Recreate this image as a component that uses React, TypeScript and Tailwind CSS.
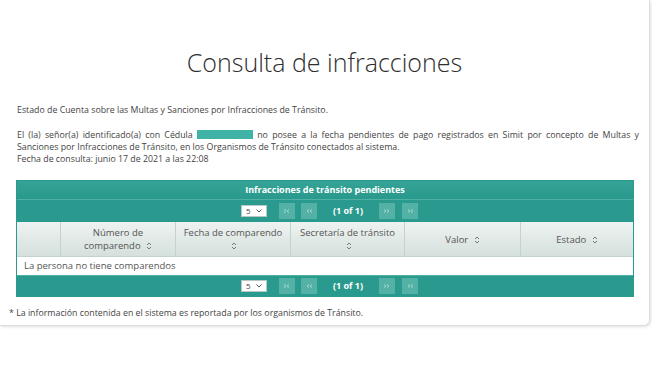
import React from "react";

const Sort = () => (
  <svg width="6" height="8" viewBox="0 0 6 8" className="inline-block ml-[3px] align-[-1px]">
    <path d="M1 3 L3 1 L5 3" fill="none" stroke="#6b6b6b" strokeWidth="0.9" />
    <path d="M1 5 L3 7 L5 5" fill="none" stroke="#6b6b6b" strokeWidth="0.9" />
  </svg>
);

const PgBtn = ({ kind }: { kind: "first" | "prev" | "next" | "last" }) => {
  const c = "#a9dcd5";
  return (
    <div className="w-[16px] h-[16px] bg-[#54b1a6] flex items-center justify-center">
      <svg width="8" height="6" viewBox="0 0 8 6">
        {kind === "first" && (
          <>
            <path d="M2 1 V5" stroke={c} strokeWidth="0.9" />
            <path d="M6 1.5 L4 3 L6 4.5" fill="none" stroke={c} strokeWidth="0.9" />
          </>
        )}
        {kind === "prev" && (
          <>
            <path d="M4 1.5 L2 3 L4 4.5" fill="none" stroke={c} strokeWidth="0.9" />
            <path d="M7 1.5 L5 3 L7 4.5" fill="none" stroke={c} strokeWidth="0.9" />
          </>
        )}
        {kind === "next" && (
          <>
            <path d="M1 1.5 L3 3 L1 4.5" fill="none" stroke={c} strokeWidth="0.9" />
            <path d="M4 1.5 L6 3 L4 4.5" fill="none" stroke={c} strokeWidth="0.9" />
          </>
        )}
        {kind === "last" && (
          <>
            <path d="M2 1.5 L4 3 L2 4.5" fill="none" stroke={c} strokeWidth="0.9" />
            <path d="M6 1 V5" stroke={c} strokeWidth="0.9" />
          </>
        )}
      </svg>
    </div>
  );
};

const Paginator = ({ h }: { h: string }) => (
  <div className={`${h} bg-[#2a9a8e] border-t border-[#4fb0a4] flex items-center pl-[224px]`}>
    <div className="w-[26px] h-[12px] bg-white border border-[#b8c8c4] flex items-center justify-between px-[4px] text-[8px] leading-[10px] text-[#444]">
      <span>5</span>
      <svg width="6" height="4" viewBox="0 0 6 4">
        <path d="M0.5 0.5 L3 3 L5.5 0.5" fill="none" stroke="#555" strokeWidth="1" />
      </svg>
    </div>
    <div className="ml-[12px] flex gap-[6px]">
      <PgBtn kind="first" />
      <PgBtn kind="prev" />
    </div>
    <div className="w-[62px] text-center text-white font-bold text-[9px]">(1 of 1)</div>
    <div className="flex gap-[7px]">
      <PgBtn kind="next" />
      <PgBtn kind="last" />
    </div>
  </div>
);

export default function App() {
  const th = "border-l border-[#c4d2cd] flex items-center justify-center text-center text-[9.5px] leading-[13px] text-[#555] px-1";
  return (
    <div className="w-[652px] h-[366px] bg-white overflow-hidden" style={{ fontFamily: '"Open Sans", sans-serif' }}>
      <div className="w-[650px] h-[326px] bg-white border-r border-b border-[#dedede] rounded-br-[6px] shadow-[1px_1px_3px_rgba(0,0,0,0.12)] flex flex-col">
        <h1 className="mt-[44px] text-center text-[25px] leading-[36px] font-light text-[#2e2e2e]">
          Consulta de infracciones
        </h1>
        <div className="mt-[24px] pl-[17px] pr-[10px] text-[8.8px] leading-[12px] text-[#444]">
          <p>Estado de Cuenta sobre las Multas y Sanciones por Infracciones de Tránsito.</p>
          <p className="mt-[13px] text-justify [text-align-last:justify]">
            El (la) señor(a) identificado(a) con Cédula{" "}
            <span className="inline-block w-[56px] h-[9px] bg-[#3fb3a6] align-[-1px]"></span> no posee a la fecha pendientes de pago registrados en Simit por concepto de Multas y
          </p>
          <p>Sanciones por Infracciones de Tránsito, en los Organismos de Tránsito conectados al sistema.</p>
          <p>Fecha de consulta: junio 17 de 2021 a las 22:08</p>
        </div>
        <div className="mt-[15px] ml-[16px] w-[618px] border border-[#2a9a8e]">
          <div className="h-[18px] bg-gradient-to-b from-[#35a497] to-[#2a998d] flex items-center justify-center text-white font-bold text-[9px]">
            Infracciones de tránsito pendientes
          </div>
          <Paginator h="h-[23px]" />
          <div className="h-[34px] bg-gradient-to-b from-[#eef3f1] to-[#d5e0dc] grid grid-cols-[43px_115px_115px_114px_116px_1fr]">
            <div></div>
            <div className={th}>
              <span>Número de<br />comparendo <Sort /></span>
            </div>
            <div className={th}>
              <span>Fecha de comparendo<br /><Sort /></span>
            </div>
            <div className={th}>
              <span>Secretaría de tránsito<br /><Sort /></span>
            </div>
            <div className={th}>
              <span>Valor <Sort /></span>
            </div>
            <div className={th}>
              <span>Estado <Sort /></span>
            </div>
          </div>
          <div className="h-[19px] bg-white border-t border-[#c4d2cd] flex items-center pl-[7px] text-[9.5px] text-[#555]">
            La persona no tiene comparendos
          </div>
          <Paginator h="h-[21px]" />
        </div>
        <p className="mt-[10px] pl-[9px] text-[8.8px] text-[#444]">
          * La información contenida en el sistema es reportada por los organismos de Tránsito.
        </p>
      </div>
    </div>
  );
}
